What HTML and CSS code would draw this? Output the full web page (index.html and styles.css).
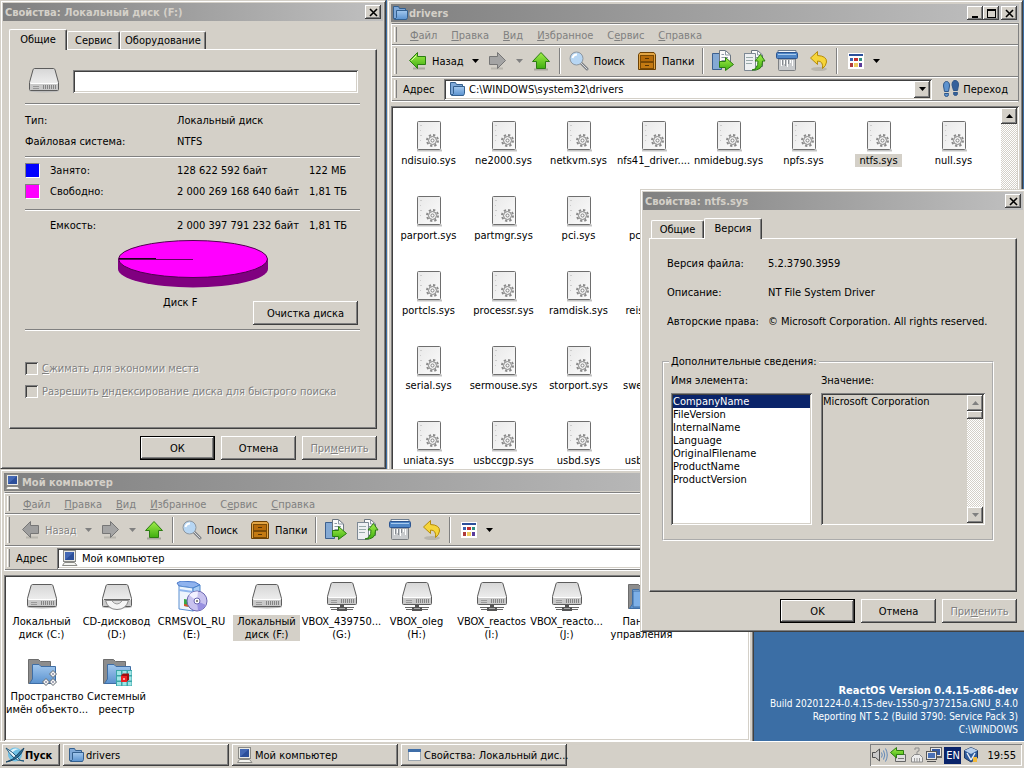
FILE: index.html
```html
<!DOCTYPE html>
<html lang="ru">
<head>
  <meta charset="utf-8">
  <title>ReactOS</title>
  <meta name="viewport" content="width=device-width, initial-scale=1">
  <link rel="stylesheet" href="styles.css">
</head>
<body>
  <!-- Icon sprites -->
  <svg class="sprites" aria-hidden="true">
    <defs>
      <linearGradient id="g-metal" x1="0" y1="0" x2="0" y2="1"><stop offset="0" stop-color="#d6d6d6"/><stop offset="1" stop-color="#f8f8f8"/></linearGradient>
      <linearGradient id="g-blue" x1="0" y1="0" x2="0" y2="1"><stop offset="0" stop-color="#a3c8ee"/><stop offset="1" stop-color="#5a92cf"/></linearGradient>
      <linearGradient id="g-green" x1="0" y1="0" x2="0" y2="1"><stop offset="0" stop-color="#a2ee4a"/><stop offset="1" stop-color="#3fae10"/></linearGradient>
      <linearGradient id="g-page" x1="0" y1="0" x2="1" y2="1"><stop offset="0" stop-color="#e9e9e9"/><stop offset="1" stop-color="#fbfbfb"/></linearGradient>
      <g id="drive-body">
        <path d="M6.500 3.500H25.500Q26.500 3.500 27 4.800L30.500 17.500V24.500Q30.500 25.500 29.500 25.500H2.500Q1.500 25.500 1.500 24.500V17.500L5 4.800Q5.500 3.500 6.500 3.500Z" fill="url(#g-metal)" stroke="#5c5c5c"/>
        <path d="M2 18.500H30V25H2Z" fill="#c9c9c9"/>
        <path d="M2.500 18.500H29.500" stroke="#fff"/>
      </g>
      <g id="vents">
        <path d="M5 21.500H11M5 23.500H11" stroke="#999"/>
        <path d="M15.500 20V24M17.500 20V24M19.500 20V24M21.500 20V24M23.500 20V24M25.500 20V24M27.500 20V24" stroke="#858585"/>
      </g>
      <g id="folder-big">
        <path d="M2.500 27.500V3.500H12.500L14.500 5.500H24.500V12H8V27.500Z" fill="#8d8d8d" stroke="#6d6d6d"/>
        <path d="M6.500 8.500H13L15 10.500H29.500V25L28 27.500H3.500L6.500 23Z" fill="url(#g-blue)" stroke="#3f6ea5"/>
      </g>
      <g id="pages">
        <path d="M1.500 4.500H10.500V20.500H1.500Z" fill="#84a9d4" stroke="#3d608f"/>
        <path d="M8.500 1.500H14.500L19.500 6V17.500H8.500Z" fill="#fafafa" stroke="#6b7580"/>
        <path d="M14.500 1.500V6H19.500M10.500 8.500H17M10.500 11.500H17M10.500 5.500H13" fill="none" stroke="#8d98a5"/>
      </g>
      <g id="node" fill="#f4f4f4" stroke="#606870"><path d="M0 -3.500L3.500 0L0 3.500L-3.500 0Z"/><rect x="-1" y="-1" width="2" height="2" fill="#aab" stroke="none"/></g>
    </defs>

    <symbol id="i-drive" viewBox="0 0 32 32"><ellipse cx="16" cy="26" rx="15" ry="1.500" fill="#bbb"/><use href="#drive-body"/><use href="#vents"/></symbol>
    <symbol id="i-cd" viewBox="0 0 32 32">
      <ellipse cx="16" cy="26" rx="15" ry="1.500" fill="#bbb"/><use href="#drive-body"/>
      <path d="M4.500 19.500H27.500Q25 28.500 16 28.500T4.500 19.500Z" fill="#f5f5f5" stroke="#888"/>
      <path d="M11 20Q16 26 21 20" fill="#ddd" stroke="#999"/>
      <path d="M3 18.500H29" stroke="#666"/>
    </symbol>
    <symbol id="i-netdrive" viewBox="0 0 32 32">
      <path d="M4 26.500H12M20 26.500H28M5 28.500H27" stroke="#666"/>
      <use href="#drive-body" y="-2"/><use href="#vents" y="-2"/>
      <path d="M14 24H18V26H21V30H11V26H14Z" fill="#555"/><path d="M13 27.500H19" stroke="#aaa"/>
    </symbol>
    <symbol id="i-setup" viewBox="0 0 32 32">
      <path d="M1 2L5 0L19 1L24 4L17 7L3 5Z" fill="#8fb3ee" stroke="#4a78c8"/>
      <path d="M3 5L17 7V30L3 28Z" fill="#eef5fd" stroke="#5b8fd0"/>
      <path d="M17 7L24 4V26L17 30Z" fill="#a9cdf4" stroke="#4a84cc"/>
      <path d="M3 8L17 10V12L3 10Z" fill="#8fb6ee"/>
      <path d="M8 18L14 19V26L8 25Z" fill="#39a845"/><path d="M8 23L14 24V26L8 25Z" fill="#d9542c"/>
      <circle cx="21" cy="20" r="10" fill="#c9c3ef" stroke="#6a66b0"/>
      <path d="M21 20L13 14A10 10 0 0 1 22 10.500Z" fill="#f2f0ff"/><path d="M21 20L30 24A10 10 0 0 1 22 29.500Z" fill="#9890e0"/>
      <circle cx="21" cy="20" r="3" fill="#fff" stroke="#6a66b0"/><circle cx="21" cy="20" r="1" fill="#665"/>
    </symbol>
    <symbol id="i-panel" viewBox="0 0 32 32"><use href="#folder-big"/><path d="M7 10H28V26H7Z" fill="#7db0e8" stroke="#3f6ea5"/></symbol>
    <symbol id="i-objects" viewBox="0 0 32 32"><use href="#folder-big"/><use href="#node" x="27" y="18"/><use href="#node" x="20" y="26"/><use href="#node" x="27" y="26"/></symbol>
    <symbol id="i-registry" viewBox="0 0 32 32">
      <use href="#folder-big"/>
      <path d="M15 14H31V30H15Z" fill="#3aa5a8"/>
      <path d="M16 15H20V19H16ZM21.500 15H25.500V19H21.500ZM27 15H30.500V19H27ZM16 20.500H20V24.500H16ZM27 20.500H30.500V24.500H27ZM16 26H20V29.500H16ZM21.500 26H25.500V29.500H21.500ZM27 26H30.500V29.500H27Z" fill="#9fe6e6"/>
      <path d="M20 19.500L22 17.500H28V23.500L26 25.500H20Z" fill="#a01010"/><rect x="20" y="20" width="6" height="6" fill="#ee2222"/><rect x="22" y="22" width="2" height="2" fill="#ff9c9c"/>
    </symbol>
    <symbol id="i-sys" viewBox="0 0 32 32">
      <path d="M4 30.500H29" stroke="#c4c4c4" stroke-width="2"/>
      <rect x="4.500" y="1.500" width="23" height="28" rx="1" fill="url(#g-page)" stroke="#6e6e6e"/>
      <path d="M7 5.500H9M7 10.500H8M7 15.500H9M7 20.500H8" stroke="#ccc"/>
      <circle cx="19.500" cy="20.500" r="5.500" fill="none" stroke="#8a8a8a" stroke-width="2" stroke-dasharray="2.300 2"/>
      <circle cx="19.500" cy="20.500" r="4" fill="#eee" stroke="#858585"/>
      <circle cx="19.500" cy="20.500" r="1.500" fill="#fff" stroke="#858585"/>
    </symbol>
    <symbol id="i-folder" viewBox="0 0 16 16">
      <path d="M1.500 13.500V1.500H6.500L7.500 3.500H13.500V6H5V13.500Z" fill="#7ea8d8" stroke="#34608f"/>
      <path d="M4.500 5.500H15.500V12.500L14.500 14.500H2.500L4.500 12.500Z" fill="url(#g-blue)" stroke="#34608f"/>
    </symbol>
    <symbol id="i-computer" viewBox="0 0 16 16">
      <rect x="1.500" y="0.500" width="12" height="11" fill="#e9e9e4" stroke="#8a8a86"/>
      <rect x="3" y="2" width="9" height="8" fill="#2c4f9a"/><path d="M3 2H12L3 10Z" fill="#4468b4"/>
      <path d="M2.500 12.500H12.500L15 15.500H0.500Z" fill="#f4f4f0" stroke="#8a8a86"/>
    </symbol>
    <symbol id="i-app" viewBox="0 0 16 16"><rect x="2.500" y="2.500" width="12" height="11" fill="#fff" stroke="#9aa5b0"/><rect x="2" y="2" width="13" height="3" fill="#3f6ea8"/></symbol>

    <symbol id="i-back" viewBox="0 0 20 20"><path d="M5 17.500H17" stroke="#a9a69e" stroke-width="2"/><path d="M9.500 1.500V5.500H17.500V13.500H9.500V17.500L1.500 9.500Z" fill="url(#g-green)" stroke="#2c7d12"/><path d="M8 5L3.500 9.500" stroke="#d8ffa8"/></symbol>
    <symbol id="i-back-off" viewBox="0 0 20 20"><path d="M5 17.500H17" stroke="#b9b6ae" stroke-width="2"/><path d="M9.500 1.500V5.500H17.500V13.500H9.500V17.500L1.500 9.500Z" fill="#9e9e9e" stroke="#767676"/></symbol>
    <symbol id="i-forward-off" viewBox="0 0 20 20"><path d="M3 17.500H15" stroke="#b9b6ae" stroke-width="2"/><path d="M9.500 1.500V5.500H1.500V13.500H9.500V17.500L17.500 9.500Z" fill="#a4a4a4" stroke="#767676"/></symbol>
    <symbol id="i-up" viewBox="0 0 20 20"><path d="M3 18.500H17" stroke="#a9a69e" stroke-width="2"/><path d="M10 1.500L18.500 10.500H14.500V17.500H5.500V10.500H1.500Z" fill="url(#g-green)" stroke="#2c7d12"/></symbol>
    <symbol id="i-search" viewBox="0 0 20 20"><path d="M12 12L18 18" stroke="#7d8085" stroke-width="3" stroke-linecap="round"/><path d="M12 12L18 18" stroke="#d9dce0" stroke-linecap="round"/><circle cx="7.500" cy="7.500" r="6.500" fill="#b7d6f3" stroke="#8d969f"/><path d="M3.500 7Q4.500 3.500 8 3.500" stroke="#fff" stroke-width="2" fill="none"/></symbol>
    <symbol id="i-folders" viewBox="0 0 20 20"><path d="M1.500 3.500L3 1.500H17L18.500 3.500V18.500H1.500Z" fill="#e2a544" stroke="#6d4205"/><rect x="3.500" y="4.500" width="13" height="6" fill="#b86c0a" stroke="#7a4a06"/><rect x="3.500" y="11.500" width="13" height="6" fill="#c47a12" stroke="#7a4a06"/><path d="M8 7.500H12M8 14.500H12" stroke="#5a3503"/></symbol>
    <symbol id="i-move" viewBox="0 0 24 24"><use href="#pages"/><path d="M8.500 12.500H14.500V8.500L22.500 15.500L14.500 21.500V18.500H8.500Z" fill="url(#g-green)" stroke="#2c7d12"/></symbol>
    <symbol id="i-copy" viewBox="0 0 24 24"><use href="#pages"/><path d="M1.500 4.500H12.500V21.500H1.500Z" fill="#eef0f2" stroke="#7d8893"/><path d="M3 8.500H10M3 11.500H10M3 14.500H9" stroke="#9aa"/><path d="M9 21Q15 20 15 12H12L17.500 5.500L22 12H19.500Q20 22 9 21Z" fill="url(#g-green)" stroke="#2c7d12"/></symbol>
    <symbol id="i-shred" viewBox="0 0 24 24"><path d="M3.500 10H20.500V20.500Q20.500 21.500 19.500 21.500H4.500Q3.500 21.500 3.500 20.500Z" fill="#c8cacc" stroke="#7d8083"/><path d="M3 1.500H21V5H3Z" fill="#f4f6f8" stroke="#6c7d90"/><rect x="1.500" y="3.500" width="21" height="6" rx="1" fill="#4f86c6" stroke="#2c5591"/><path d="M3 5.500H21" stroke="#a9cbee"/><path d="M6.500 11V17M9.500 11V15M12.500 11V18M15.500 11V14M17.500 11V17" stroke="#fff"/><path d="M7.500 11V16M10.500 11V17M13.500 11V15" stroke="#858a90"/></symbol>
    <symbol id="i-undo" viewBox="0 0 24 24"><ellipse cx="12" cy="20" rx="8" ry="2" fill="#b9b6ae"/><path d="M10.500 2.500V6.500Q20 7 19.500 13Q19 17 15.500 19.500Q16.500 12 10.500 12V15.500L3.500 9Z" fill="#f6d53a" stroke="#b58c0c"/></symbol>
    <symbol id="i-views" viewBox="0 0 16 16"><rect width="16" height="16" fill="#fff"/><path d="M1 1H15V3H1Z" fill="#2c4f9a"/><path d="M2 5H5V8H2Z" fill="#3b62b0"/><path d="M6 5H10V8H6Z" fill="#c03030"/><path d="M11 5H14V8H11Z" fill="#2f8f80"/><path d="M2 10H5V14H2Z" fill="#b03a3a"/><path d="M6 10H10V14H6Z" fill="#f0cc60"/><path d="M11 10H14V14H11Z" fill="#5a3a9a"/></symbol>
    <symbol id="i-feet" viewBox="0 0 16 18"><g stroke="#2f5688"><path d="M3.500 1.500Q6.500 1.500 6.500 6L5.500 11.500H1.500L0.500 6Q0.500 1.500 3.500 1.500Z" fill="#5e93cf"/><path d="M1.500 13.500H5.500V14.500Q5.500 16.500 3.500 16.500T1.500 14.500Z" fill="#5e93cf"/><path d="M12 0.500Q15.500 0.500 15.500 5L14.500 10.500H10.500L9 5Q9 0.500 12 0.500Z" fill="#35619c"/><path d="M10.500 12.500H14.500V13.500Q14.500 15.500 12.500 15.500T10.500 13.500Z" fill="#35619c"/></g></symbol>
    <symbol id="i-arrow" viewBox="0 0 7 4"><path d="M0 0H7L3.500 4Z" fill="currentColor"/></symbol>
    <symbol id="i-arrow-up" viewBox="0 0 7 4"><path d="M0 4H7L3.500 0Z" fill="currentColor"/></symbol>
    <symbol id="i-min" viewBox="0 0 9 9"><path d="M1 7H7V9H1Z"/></symbol>
    <symbol id="i-max" viewBox="0 0 9 9"><path d="M0 0H9V9H0ZM1 2V8H8V2Z" fill-rule="evenodd"/></symbol>
    <symbol id="i-close" viewBox="0 0 9 9"><path d="M1 1L8 8M8 1L1 8" stroke="#000" stroke-width="1.600"/></symbol>

    <symbol id="i-start" viewBox="0 0 20 18">
      <circle cx="10" cy="8.500" r="7" fill="#6fc0e4"/>
      <path d="M4 7Q7 1 14 3Q8 4 6 9Z" fill="#dff4fd"/>
      <path d="M1 2Q8 6 12 11T19 15Q12 15 8 11T1 2Z" fill="#e5f3fa" stroke="#23597c"/>
      <path d="M19 2Q16 10 10 13T1 16Q8 14 12 9T19 2Z" fill="#2b6f98" stroke="#1c4766"/>
    </symbol>
    <symbol id="i-volume" viewBox="0 0 16 16"><path d="M0.500 5.500H3.500L7.500 2V14L3.500 10.500H0.500Z" fill="#c9c9c9" stroke="#4d4d4d"/><path d="M9.500 5.500Q11 8 9.500 10.500M11.500 3.500Q14 8 11.500 12.500M13.500 1.500Q17 8 13.500 14.500" fill="none" stroke="#5f87b8"/></symbol>
    <symbol id="i-eject" viewBox="0 0 16 16"><path d="M5.500 7.500H15.500V14.500H5.500Z" fill="#ddd" stroke="#666"/><path d="M8 11.500H14" stroke="#777"/><path d="M6.500 0.500V3.500H13.500V7.500H6.500V11L0.500 5.500Z" fill="url(#g-green)" stroke="#2c7d12"/></symbol>
    <symbol id="i-plug" viewBox="0 0 16 16"><path d="M9 8V5Q9 4 11 4V1H7V3" fill="none" stroke="#8b8b8b"/><path d="M6.500 7.500H11.500L14.500 10.500V15H3.500V10.500Z" fill="#ececec" stroke="#8b8b8b"/><path d="M6.500 11V15M9 11V15M11.500 11V15" stroke="#999"/></symbol>
    <symbol id="i-network" viewBox="0 0 16 16"><path d="M4 0H16V11H4Z" fill="#666"/><rect x="5.500" y="1.500" width="9" height="7" fill="#35599f" stroke="#e8e8e8"/><path d="M0 4H11V13H0Z" fill="#555"/><rect x="1.500" y="5.500" width="8" height="6" fill="#4a70b5" stroke="#e8e8e8"/><path d="M1 14.500H10" stroke="#555"/></symbol>
    <symbol id="i-vbox" viewBox="0 0 16 16"><path d="M8 0.500L14.500 3.500V11L8 15L1.500 11V3.500Z" fill="#2f5c9c" stroke="#1d3763"/><path d="M8 0.500L14.500 3.500L8 7L1.500 3.500Z" fill="#b5cdea"/><path d="M4 6L8 13M12 6L8 13" stroke="#e8eef6" stroke-width="1.500"/><rect x="10" y="10" width="4" height="5" fill="#f1b93d"/></symbol>
  </svg>

  <main class="desktop">
    <p class="version">
      <strong>ReactOS Version 0.4.15-x86-dev</strong><br>
      Build 20201224-0.4.15-dev-1550-g737215a.GNU_8.4.0<br>
      Reporting NT 5.2 (Build 3790: Service Pack 3)<br>
      C:\WINDOWS
    </p>

    <!-- Explorer: drivers -->
    <section class="window explorer win-drivers">
      <header class="titlebar">
        <svg class="icon16"><use href="#i-folder"/></svg>
        <h2>drivers</h2>
        <button class="caption" aria-label="Свернуть"><svg><use href="#i-min"/></svg></button>
        <button class="caption" aria-label="Развернуть"><svg><use href="#i-max"/></svg></button>
        <button class="caption close" aria-label="Закрыть"><svg><use href="#i-close"/></svg></button>
      </header>
      <div class="bands">
        <nav class="band menubar">
          <button><u>Ф</u>айл</button><button><u>П</u>равка</button><button><u>В</u>ид</button><button><u>И</u>збранное</button><button>С<u>е</u>рвис</button><button><u>С</u>правка</button>
        </nav>
        <div class="band toolbar">
          <button class="tool back"><svg class="icon20"><use href="#i-back"/></svg>Назад<svg class="arrow"><use href="#i-arrow"/></svg></button>
          <button class="tool forward" disabled aria-label="Вперёд"><svg class="icon20"><use href="#i-forward-off"/></svg><svg class="arrow"><use href="#i-arrow"/></svg></button>
          <button class="tool" aria-label="Вверх"><svg class="icon20"><use href="#i-up"/></svg></button>
          <span class="divider"></span>
          <button class="tool search"><svg class="icon20"><use href="#i-search"/></svg>Поиск</button>
          <button class="tool folders"><svg class="icon20"><use href="#i-folders"/></svg>Папки</button>
          <span class="divider"></span>
          <div class="actions">
            <button aria-label="Переместить"><svg><use href="#i-move"/></svg></button>
            <button aria-label="Копировать"><svg><use href="#i-copy"/></svg></button>
            <button aria-label="Удалить"><svg><use href="#i-shred"/></svg></button>
            <button aria-label="Отменить"><svg><use href="#i-undo"/></svg></button>
          </div>
          <span class="divider"></span>
          <button class="tool views" aria-label="Вид"><svg class="icon16"><use href="#i-views"/></svg><svg class="arrow"><use href="#i-arrow"/></svg></button>
        </div>
        <div class="band addressbar">
          <label for="addr-drivers">Адрес</label>
          <div class="combo">
            <svg class="icon16"><use href="#i-folder"/></svg>
            <input type="text" id="addr-drivers" value="C:\WINDOWS\system32\drivers">
            <button aria-label="Список адресов"><svg class="arrow"><use href="#i-arrow"/></svg></button>
          </div>
          <button class="go"><svg><use href="#i-feet"/></svg>Переход</button>
        </div>
      </div>
      <div class="view">
        <ul class="files" id="drivers"></ul>
        <div class="scrollbar">
          <button aria-label="Прокрутить вверх"><svg class="arrow"><use href="#i-arrow-up"/></svg></button>
        </div>
      </div>
    </section>

    <!-- Explorer: my computer -->
    <section class="window explorer win-computer">
      <header class="titlebar">
        <svg class="icon16"><use href="#i-computer"/></svg>
        <h2>Мой компьютер</h2>
      </header>
      <div class="bands">
        <nav class="band menubar">
          <button><u>Ф</u>айл</button><button><u>П</u>равка</button><button><u>В</u>ид</button><button><u>И</u>збранное</button><button>С<u>е</u>рвис</button><button><u>С</u>правка</button>
        </nav>
        <div class="band toolbar">
          <button class="tool back" disabled><svg class="icon20"><use href="#i-back-off"/></svg>Назад<svg class="arrow"><use href="#i-arrow"/></svg></button>
          <button class="tool forward" disabled aria-label="Вперёд"><svg class="icon20"><use href="#i-forward-off"/></svg><svg class="arrow"><use href="#i-arrow"/></svg></button>
          <button class="tool" aria-label="Вверх"><svg class="icon20"><use href="#i-up"/></svg></button>
          <span class="divider"></span>
          <button class="tool search"><svg class="icon20"><use href="#i-search"/></svg>Поиск</button>
          <button class="tool folders"><svg class="icon20"><use href="#i-folders"/></svg>Папки</button>
          <span class="divider"></span>
          <div class="actions">
            <button aria-label="Переместить"><svg><use href="#i-move"/></svg></button>
            <button aria-label="Копировать"><svg><use href="#i-copy"/></svg></button>
            <button aria-label="Удалить"><svg><use href="#i-shred"/></svg></button>
            <button aria-label="Отменить"><svg><use href="#i-undo"/></svg></button>
          </div>
          <span class="divider"></span>
          <button class="tool views" aria-label="Вид"><svg class="icon16"><use href="#i-views"/></svg><svg class="arrow"><use href="#i-arrow"/></svg></button>
        </div>
        <div class="band addressbar">
          <label for="addr-computer">Адрес</label>
          <div class="combo">
            <svg class="icon16"><use href="#i-computer"/></svg>
            <input type="text" id="addr-computer" value="Мой компьютер">
          </div>
        </div>
      </div>
      <div class="view">
        <ul class="files">
          <li><svg><use href="#i-drive"/></svg><span>Локальный<br>диск (C:)</span></li>
          <li><svg><use href="#i-cd"/></svg><span>CD-дисковод<br>(D:)</span></li>
          <li><svg><use href="#i-setup"/></svg><span>CRMSVOL_RU<br>(E:)</span></li>
          <li class="selected"><svg><use href="#i-drive"/></svg><span>Локальный<br>диск (F:)</span></li>
          <li><svg><use href="#i-netdrive"/></svg><span>VBOX_439750...<br>(G:)</span></li>
          <li><svg><use href="#i-netdrive"/></svg><span>VBOX_oleg<br>(H:)</span></li>
          <li><svg><use href="#i-netdrive"/></svg><span>VBOX_reactos<br>(I:)</span></li>
          <li><svg><use href="#i-netdrive"/></svg><span>VBOX_reacto...<br>(J:)</span></li>
          <li><svg><use href="#i-panel"/></svg><span>Панель<br>управления</span></li>
          <li><svg><use href="#i-objects"/></svg><span class="long">Пространство<br>имён объекто...</span></li>
          <li><svg><use href="#i-registry"/></svg><span>Системный<br>реестр</span></li>
        </ul>
      </div>
    </section>

    <!-- Disk properties -->
    <section class="window dialog win-disk">
      <header class="titlebar">
        <h2>Свойства: Локальный диск (F:)</h2>
        <button class="caption close" aria-label="Закрыть"><svg><use href="#i-close"/></svg></button>
      </header>
      <div class="tabs">
        <button class="tab active">Общие</button><button class="tab">Сервис</button><button class="tab">Оборудование</button>
      </div>
      <div class="page disk-page">
        <div class="volume">
          <svg class="icon32"><use href="#i-drive"/></svg>
          <input type="text" aria-label="Метка тома">
        </div>
        <hr>
        <div class="info"><span>Тип:</span><span>Локальный диск</span></div>
        <div class="info"><span>Файловая система:</span><span>NTFS</span></div>
        <hr>
        <div class="info space"><span><i class="swatch used"></i>Занято:</span><span>128 622 592 байт</span><span>122 МБ</span></div>
        <div class="info space"><span><i class="swatch free"></i>Свободно:</span><span>2 000 269 168 640 байт</span><span>1,81 ТБ</span></div>
        <hr>
        <div class="info total"><span>Емкость:</span><span>2 000 397 791 232 байт</span><span>1,81 ТБ</span></div>
        <svg class="pie" viewBox="0 0 150 48">
          <path d="M0 19V29A75 18.500 0 0 0 150 29V19Z" fill="#800080"/>
          <ellipse cx="75" cy="19" rx="74.500" ry="18.500" fill="#f0f" stroke="#500050"/>
          <path d="M1 19.500H75" stroke="#600060"/><path d="M1 18.500H38" stroke="#200020"/>
        </svg>
        <div class="cleanup">
          <span>Диск F</span>
          <button class="btn">Очистка <u>д</u>иска</button>
        </div>
        <hr>
        <label class="check"><input type="checkbox" disabled><span><u>С</u>жимать для экономии места</span></label>
        <label class="check"><input type="checkbox" disabled><span>Разрешить <u>и</u>ндексирование диска для быстрого поиска</span></label>
      </div>
      <footer class="buttons">
        <button class="btn default">ОК</button><button class="btn">Отмена</button><button class="btn" disabled>При<u>м</u>енить</button>
      </footer>
    </section>

    <!-- File properties -->
    <section class="window dialog win-file">
      <header class="titlebar">
        <h2>Свойства: ntfs.sys</h2>
        <button class="caption close" aria-label="Закрыть"><svg><use href="#i-close"/></svg></button>
      </header>
      <div class="tabs">
        <button class="tab">Общие</button><button class="tab active">Версия</button>
      </div>
      <div class="page file-page">
        <dl>
          <dt>Версия файла:</dt><dd>5.2.3790.3959</dd>
          <dt>Описание:</dt><dd>NT File System Driver</dd>
          <dt>Авторские права:</dt><dd>© Microsoft Corporation. All rights reserved.</dd>
        </dl>
        <fieldset>
          <legend>Дополнительные сведения:</legend>
          <div class="details">
            <label for="item-name">Имя элемента:</label>
            <label for="item-value">Значение:</label>
            <select id="item-name" size="10">
              <option selected>CompanyName</option>
              <option>FileVersion</option>
              <option>InternalName</option>
              <option>Language</option>
              <option>OriginalFilename</option>
              <option>ProductName</option>
              <option>ProductVersion</option>
            </select>
            <div class="value-box">
              <textarea id="item-value" readonly>Microsoft Corporation</textarea>
              <div class="scrollbar">
                <button disabled aria-label="Вверх"><svg class="arrow"><use href="#i-arrow-up"/></svg></button>
                <i class="thumb"></i>
                <button class="down" disabled aria-label="Вниз"><svg class="arrow"><use href="#i-arrow"/></svg></button>
              </div>
            </div>
          </div>
        </fieldset>
      </div>
      <footer class="buttons">
        <button class="btn default">OK</button><button class="btn">Отмена</button><button class="btn" disabled>При<u>м</u>енить</button>
      </footer>
    </section>
  </main>

  <footer class="taskbar">
    <button class="start"><svg><use href="#i-start"/></svg>Пуск</button>
    <button class="task"><svg class="icon16"><use href="#i-folder"/></svg>drivers</button>
    <button class="task"><svg class="icon16"><use href="#i-computer"/></svg>Мой компьютер</button>
    <button class="task"><svg class="icon16"><use href="#i-app"/></svg>Свойства: Локальный дис...</button>
    <div class="tray">
      <svg class="icon16"><use href="#i-volume"/></svg>
      <svg class="icon16"><use href="#i-eject"/></svg>
      <svg class="icon16"><use href="#i-plug"/></svg>
      <svg class="icon16"><use href="#i-network"/></svg>
      <span class="lang">EN</span>
      <svg class="icon16"><use href="#i-vbox"/></svg>
      <time>19:55</time>
    </div>
  </footer>

  <script>
    const files = [
      'ndisuio', 'ne2000', 'netkvm', 'nfs41_driver....', 'nmidebug', 'npfs', 'ntfs', 'null',
      'parport', 'partmgr', 'pci', 'pciide', '', '', '', '',
      'portcls', 'processr', 'ramdisk', 'reiserfs', '', '', '', '',
      'serial', 'sermouse', 'storport', 'swenum', '', '', '', '',
      'uniata', 'usbccgp', 'usbd', 'usbehci'
    ];
    const list = document.getElementById('drivers');

    // Fill the drivers folder, blanks keep the grid in step
    files.forEach(function(name) {
      const li = document.createElement('li');
      if (name) {
        const label = name.endsWith('.') ? name : name + '.sys';
        li.innerHTML = '<svg><use href="#i-sys"/></svg><span>' + label + '</span>';
      }
      if (name == 'ntfs') li.className = 'selected';
      list.appendChild(li);
    });
  </script>
</body>
</html>
```
FILE: styles.css
```css
* {
  box-sizing: border-box;
}
body {
  margin: 0;
  height: 100vh;
  display: flex;
  flex-direction: column;
  overflow: hidden;
  background: #3b6ea5;
  color: #000;
  font: 11px/13px "DejaVu Sans Condensed", "Noto Sans", sans-serif;
}
button, input, select, textarea {
  font: inherit;
  color: inherit;
  margin: 0;
  padding: 0;
  border: none;
  border-radius: 0;
  background: none;
  outline: none;
}
svg {
  display: block;
  flex: none;
}
.sprites {
  position: absolute;
  width: 0;
  height: 0;
}
.icon16 {
  width: 16px;
  height: 16px;
}
.icon20 {
  width: 20px;
  height: 20px;
}
.icon32 {
  width: 32px;
  height: 32px;
}
.arrow {
  width: 7px;
  height: 4px;
}

/* Desktop */
.desktop {
  position: relative;
  flex: 1;
  min-height: 0;
  overflow: hidden;
}
.version {
  position: absolute;
  right: 6px;
  bottom: 5px;
  margin: 0;
  color: #fff;
  font-size: 10px;
  text-align: right;
  white-space: nowrap;
}
.version strong {
  font-size: 11px;
}

/* Windows */
.window {
  position: absolute;
  display: flex;
  flex-direction: column;
  background: #d4d0c8;
  border: 1px solid;
  border-color: #d4d0c8 #404040 #404040 #d4d0c8;
  box-shadow: inset 1px 1px #fff, inset -1px -1px #808080;
}
.explorer {
  padding: 3px;
}
.dialog {
  padding: 2px;
  width: 386px;
}
.win-drivers {
  left: 387px;
  right: 1px;
  top: 0;
  height: 480px;
}
.win-computer {
  left: 0;
  width: 754px;
  top: 469px;
  bottom: -4px;
}
.win-disk {
  left: 0;
  top: 0;
  height: 469px;
}
.win-file {
  left: 640px;
  top: 189px;
  height: 443px;
}
.titlebar {
  display: flex;
  align-items: center;
  height: 18px;
  flex: none;
  padding: 0 2px;
  background: linear-gradient(to right, #808080, #c0c0c0);
  color: #d4d0c8;
}
.titlebar h2 {
  flex: 1;
  margin: 0;
  font-size: 11px;
  line-height: 13px;
  white-space: nowrap;
}
.explorer .titlebar {
  padding-left: 1px;
}
.explorer .titlebar h2 {
  margin-left: 1px;
}
.caption {
  width: 16px;
  height: 14px;
  display: flex;
  align-items: center;
  justify-content: center;
  background: #d4d0c8;
  box-shadow: inset -1px -1px #404040, inset 1px 1px #fff, inset -2px -2px #808080;
}
.caption svg {
  width: 9px;
  height: 9px;
}
.caption + .close {
  margin-left: 2px;
}

/* Explorer bars */
.bands {
  flex: none;
  margin-top: 1px;
  border-left: 1px solid #fff;
  border-right: 1px solid #808080;
  border-top: 1px solid #808080;
  border-bottom: 1px solid #fff;
}
.band {
  display: flex;
  align-items: center;
  border-top: 1px solid #fff;
  border-bottom: 1px solid #808080;
}
.band::before {
  content: "";
  width: 1px;
  align-self: stretch;
  margin: 2px 0 2px 2px;
  flex: none;
  border-left: 1px solid #fff;
  border-right: 1px solid #808080;
}
.menubar {
  height: 21px;
  padding-right: 4px;
}
.menubar button {
  color: #808080;
  padding: 1px 6px 0 8px;
}
.menubar button:first-of-type {
  margin-left: 5px;
}
.toolbar {
  height: 32px;
}
.tool {
  display: flex;
  align-items: center;
  gap: 5px;
}
.tool .arrow {
  margin-left: 3px;
}
.tool:disabled {
  color: #808080;
  text-shadow: 1px 1px #fff;
}
.back {
  margin-left: 11px;
  gap: 4px;
}
.back .arrow {
  margin-left: 4px;
}
.forward {
  margin: 0 8px 0 9px;
}
.search {
  margin-left: 8px;
}
.folders {
  margin-left: 12px;
}
.divider {
  width: 2px;
  height: 26px;
  margin: 0 0 0 8px;
  border-left: 1px solid #808080;
  border-right: 1px solid #fff;
}
.actions {
  display: flex;
  gap: 8px;
  margin-left: 7px;
}
.actions svg {
  width: 24px;
  height: 24px;
}
.actions + .divider {
  margin-left: 5px;
}
.views {
  margin-left: 10px;
}
.views .arrow {
  margin-left: 4px;
}
.addressbar {
  height: 24px;
}
.addressbar label {
  width: 47px;
  flex: none;
  padding-left: 6px;
}
.combo {
  flex: 1;
  display: flex;
  align-items: center;
  height: 21px;
  padding: 2px 2px 2px 5px;
  background: #fff;
  box-shadow: inset 1px 1px #808080, inset -1px -1px #fff, inset 2px 2px #404040, inset -2px -2px #d4d0c8;
}
.combo input {
  flex: 1;
  min-width: 0;
  margin-left: 4px;
}
.combo button {
  width: 16px;
  height: 17px;
  display: flex;
  align-items: center;
  justify-content: center;
  background: #d4d0c8;
  box-shadow: inset -1px -1px #404040, inset 1px 1px #fff, inset -2px -2px #808080;
}
.go {
  display: flex;
  align-items: center;
  gap: 4px;
  padding: 0 10px 0 11px;
}
.go svg {
  width: 16px;
  height: 18px;
}

/* Icon view */
.view {
  flex: 1;
  display: flex;
  min-height: 0;
  margin-top: 4px;
  padding: 2px 2px 2px 0;
  background: #fff;
  box-shadow: inset 1px 1px #808080, inset -1px -1px #fff, inset 2px 2px #404040, inset -2px -2px #d4d0c8;
}
.files {
  flex: 1;
  display: grid;
  grid-template-columns: repeat(auto-fill, 75px);
  grid-auto-rows: 75px;
  overflow: hidden;
  margin: 0;
  padding: 4px 0 0;
  list-style: none;
}
.win-drivers .files {
  padding-top: 12px;
}
.files li {
  display: flex;
  flex-direction: column;
  align-items: center;
  text-align: center;
  white-space: nowrap;
}
.files svg {
  width: 32px;
  height: 32px;
}
.files span {
  margin-top: 2px;
  padding: 0 4px;
}
.files .long {
  align-self: flex-start;
  padding: 0 2px;
}
.files .selected span {
  background: #d4d0c8;
}
.scrollbar {
  width: 16px;
  flex: none;
  display: flex;
  flex-direction: column;
  background: repeating-conic-gradient(#fff 0 25%, #d4d0c8 0 50%) 0 0 / 2px 2px;
}
.scrollbar button, .thumb {
  width: 16px;
  height: 16px;
  display: flex;
  align-items: center;
  justify-content: center;
  background: #d4d0c8;
  box-shadow: inset -1px -1px #404040, inset 1px 1px #fff, inset -2px -2px #808080;
}
.scrollbar button:disabled {
  color: #808080;
}
.thumb {
  height: 8px;
}
.down {
  margin-top: auto;
}

/* Property sheets */
.tabs {
  display: flex;
  align-items: flex-end;
  height: 21px;
  flex: none;
  margin: 8px 6px 0;
}
.tab {
  min-width: 53px;
  height: 18px;
  margin-bottom: 1px;
  padding: 0 4px;
  border-top: 1px solid #fff;
  border-left: 1px solid #fff;
  border-right: 1px solid #404040;
  border-radius: 2px 2px 0 0;
  box-shadow: inset -1px 0 #808080;
}
.tab.active {
  min-width: 58px;
  height: 21px;
  margin-bottom: 0;
  padding-bottom: 2px;
  background: #d4d0c8;
  z-index: 1;
}
.win-file .tabs {
  padding-left: 2px;
}
.page {
  flex: 1;
  margin: -1px 6px 7px;
  border: 1px solid;
  border-color: #fff #404040 #404040 #fff;
  box-shadow: inset -1px -1px #808080;
}
.disk-page {
  padding: 15px 16px 0 15px;
}
.volume {
  display: flex;
  align-items: center;
  justify-content: space-between;
  margin-left: 3px;
}
.volume input {
  width: 285px;
  height: 23px;
  margin-right: 2px;
}
.volume input, .details select, .value-box {
  background: #fff;
  box-shadow: inset 1px 1px #808080, inset -1px -1px #fff, inset 2px 2px #404040, inset -2px -2px #d4d0c8;
}
hr {
  height: 2px;
  margin: 6px 0 9px;
  border: none;
  border-top: 1px solid #808080;
  border-bottom: 1px solid #fff;
}
.info {
  display: grid;
  grid-template-columns: 152px 132px 1fr;
  margin-bottom: 8px;
  white-space: nowrap;
}
.info + hr {
  margin: 7px 0 5px;
}
.space {
  line-height: 15px;
  margin-bottom: 6px;
}
.space span {
  display: flex;
}
.space + hr {
  margin: 10px 0 8px;
}
.swatch {
  width: 15px;
  height: 15px;
  margin-right: 10px;
  border: 1px solid;
  border-color: #808080 #fff #fff #808080;
}
.used {
  background: #00f;
}
.free {
  background: #f0f;
}
.total span:first-child {
  padding-left: 25px;
}
.pie {
  width: 150px;
  height: 48px;
  margin: 0 auto;
}
.cleanup {
  display: flex;
  justify-content: space-between;
  margin: 8px 2px 0 138px;
}
.cleanup .btn {
  width: 105px;
  margin-top: 5px;
}
.cleanup + hr {
  margin: 4px 0 31px;
}
.check {
  display: flex;
  align-items: center;
  gap: 4px;
  margin-bottom: 10px;
  color: #808080;
  text-shadow: 1px 1px #fff;
}
.check input {
  appearance: none;
  width: 13px;
  height: 13px;
  box-shadow: inset 1px 1px #808080, inset -1px -1px #fff, inset 2px 2px #404040;
}
.btn {
  width: 75px;
  height: 24px;
  background: #d4d0c8;
  box-shadow: inset -1px -1px #404040, inset 1px 1px #fff, inset -2px -2px #808080;
}
.btn.default {
  border: 1px solid #000;
}
.btn:disabled {
  color: #808080;
  text-shadow: 1px 1px #fff;
}
.buttons {
  display: flex;
  justify-content: flex-end;
  gap: 6px;
  padding: 0 6px 6px;
}

.file-page {
  padding: 18px 22px 0 12px;
}
dl {
  display: grid;
  grid-template-columns: 101px 1fr;
  row-gap: 16px;
  margin: 0 0 27px 5px;
  white-space: nowrap;
}
dd {
  margin: 0;
}
fieldset {
  margin: 0;
  padding: 0 7px 14px;
  border: 2px groove #fff;
  min-width: 0;
}
legend {
  padding: 0 2px;
  margin-left: -2px;
}
.details {
  display: grid;
  grid-template-columns: 141px 1fr;
  column-gap: 9px;
  padding-top: 6px;
}
.details label {
  margin-bottom: 6px;
}
.details select {
  height: 132px;
  padding: 2px;
  overflow: hidden;
}
.details option {
  min-height: 13px;
  padding: 0;
  line-height: 13px;
}
.details option:checked {
  background: #0a246a linear-gradient(#0a246a, #0a246a);
  color: #fff;
  -webkit-text-fill-color: #fff;
}
.value-box {
  display: flex;
  padding: 2px;
  background: #d4d0c8;
}
.value-box textarea {
  flex: 1;
  min-width: 0;
  resize: none;
  overflow: hidden;
}

/* Taskbar */
.taskbar {
  flex: none;
  display: flex;
  align-items: center;
  gap: 3px;
  height: 27px;
  padding: 0 2px;
  background: #d4d0c8;
  border-top: 1px solid #fff;
}
.start, .task {
  display: flex;
  align-items: center;
  height: 22px;
  box-shadow: inset -1px -1px #404040, inset 1px 1px #fff, inset -2px -2px #808080;
}
.start {
  width: 58px;
  padding-left: 3px;
  font-weight: bold;
}
.start svg {
  width: 20px;
  height: 18px;
}
.task {
  width: 166px;
  padding-left: 5px;
  gap: 2px;
  white-space: nowrap;
}
.tray {
  display: flex;
  align-items: center;
  gap: 2px;
  height: 22px;
  margin-left: auto;
  padding: 0 6px 0 2px;
  box-shadow: inset 1px 1px #808080, inset -1px -1px #fff;
}
.lang {
  width: 17px;
  padding: 2px 0;
  background: #0a246a;
  color: #fff;
  text-align: center;
}
.tray time {
  margin-left: 6px;
}
```
